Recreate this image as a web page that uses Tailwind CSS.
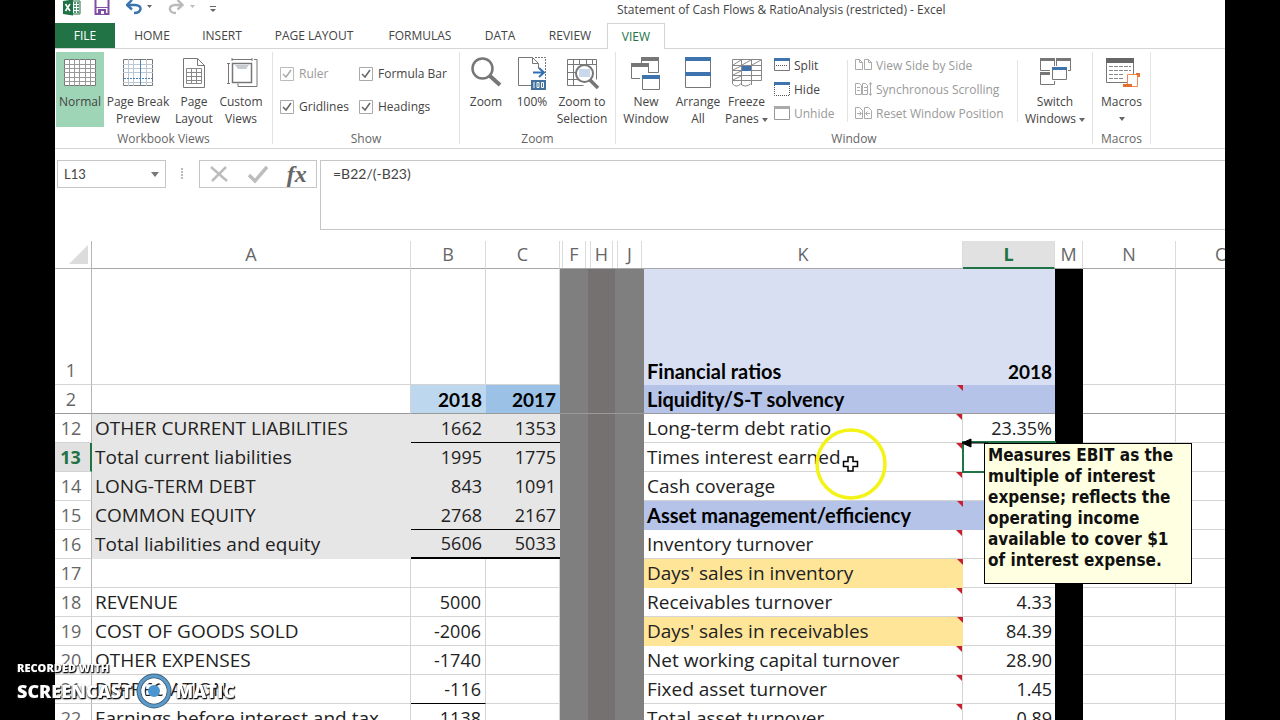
<!DOCTYPE html>
<html lang="en">
<head>
  <meta charset="UTF-8" />
  <meta name="viewport" content="width=device-width, initial-scale=1.0" />
  <title>Statement of Cash Flows & RatioAnalysis - Excel</title>
  <script src="https://cdn.jsdelivr.net/npm/@tailwindcss/browser@4"></script>
</head>
<body class="bg-black h-screen overflow-hidden px-[55px] font-['Open_Sans',sans-serif] text-[12px] leading-[17px] text-[#444]">

  <div class="bg-white h-full flex flex-col overflow-hidden">

    <!-- Title bar -->
    <header class="relative h-[23px] shrink-0 flex items-start pl-2">
      <svg class="w-[18px] h-4 shrink-0" viewBox="0 0 18 16">
        <path d="M9 1h8v13H9z" fill="#fff" stroke="#1e7145" />
        <path d="M11 3h2M14 3h2M11 6h2M14 6h2M11 9h2M14 9h2M11 12h2M14 12h2" stroke="#1e7145" stroke-width="1.4" />
        <path d="M0 1l10-1.500v16L0 14z" fill="#1e7145" />
        <path d="M2.500 4l4.500 7M7 4l-4.500 7" stroke="#fff" stroke-width="1.600" />
      </svg>
      <button class="ml-[13px] shrink-0" aria-label="Save">
        <svg class="w-4 h-4" viewBox="0 0 16 16">
          <path d="M1.500 0v14h13V0" fill="#fff" stroke="#7f4fa3" stroke-width="2" />
          <path d="M3.500 0h9v6h-9z" fill="#fff" />
          <path d="M2 7h12v1H2zM4 9h8v5H4z" fill="#7f4fa3" />
          <path d="M7 11h3v3H7z" fill="#fff" />
        </svg>
      </button>
      <button class="ml-4 shrink-0 flex" aria-label="Undo">
        <svg class="w-[26px] h-4" viewBox="0 0 26 16">
          <path d="M1 5h8c8 0 7 8-1 8M6 0L1 5l5 4.500" fill="none" stroke="#3b73af" stroke-width="2.400" />
          <path d="M21 5h5l-2.500 3z" fill="#666" />
        </svg>
      </button>
      <button class="ml-4 shrink-0 flex" aria-label="Redo">
        <svg class="w-[28px] h-4" viewBox="0 0 28 16">
          <path d="M14 5H7C0 5 0 13 8 13M9.500 0l5 5-5 4.500" fill="none" stroke="#bbb" stroke-width="2.400" />
          <path d="M22 5h5l-2.500 3z" fill="#bbb" />
        </svg>
      </button>
      <button class="ml-[13px] shrink-0" aria-label="Customize toolbar">
        <svg class="w-2 h-4" viewBox="0 0 8 16"><path d="M1 6.500h6" stroke="#666" /><path d="M1 9h6l-3 3z" fill="#666" /></svg>
      </button>
      <h1 class="flex-1 pl-[400px] leading-[19px] whitespace-nowrap">Statement of Cash Flows &amp; RatioAnalysis (restricted) - Excel</h1>
    </header>

    <!-- Ribbon tabs -->
    <nav class="h-[26px] shrink-0 flex border-b border-[#d4d4d4] leading-[26px]">
      <button class="w-[60px] bg-[#217346] text-white">FILE</button>
      <button class="w-[74px]">HOME</button>
      <button class="w-[66px]">INSERT</button>
      <button class="w-[118px]">PAGE LAYOUT</button>
      <button class="w-[94px]">FORMULAS</button>
      <button class="w-[66px]">DATA</button>
      <button class="w-[74px]">REVIEW</button>
      <button class="w-[58px] h-[26px] bg-white border border-b-0 border-[#d4d4d4] text-[#217346] leading-[25px]">VIEW</button>
    </nav>

    <!-- Ribbon -->
    <div class="h-[100px] shrink-0 flex pt-[3px] border-b border-[#d4d4d4]">
      <section class="w-[218px] shrink-0 flex flex-col border-r border-[#e3e3e3] mb-1">
        <div class="flex-1 flex items-start pl-px">
          <button class="w-12 h-[75px] pt-1 gap-px bg-[#9fd5b7] flex flex-col items-center">
            <svg class="w-9 h-9" viewBox="0 0 36 36">
              <path d="M2.500 3.500h31v26h-31z" fill="#fff" stroke="#777" />
              <path d="M2 8.500h32M2 12.500h32M2 16.500h32M2 21.500h32M2 25.500h32M7.500 3v27M12.500 3v27M17.500 3v27M23.500 3v27M28.500 3v27" stroke="#999" />
            </svg>
            <span>Normal</span>
          </button>
          <button class="w-[68px] h-[75px] pt-1 gap-px flex flex-col items-center">
            <svg class="w-9 h-9" viewBox="0 0 36 36">
              <path d="M3.500 3.500h29v26h-29z" fill="#fff" stroke="#777" />
              <path d="M3 8.500h30M3 12.500h30M3 16.500h30M3 26.500h30M8.500 3v27M13.500 3v27M26.500 3v27" stroke="#bcc7d3" />
              <path d="M20.500 4v25" stroke="#4d82b8" /><path d="M4 22.500h28" stroke="#4d82b8" stroke-dasharray="2 1" />
            </svg>
            <span>Page Break<br>Preview</span>
          </button>
          <button class="w-11 h-[75px] pt-1 gap-px flex flex-col items-center">
            <svg class="w-9 h-9" viewBox="0 0 36 36">
              <path d="M7.500 2.500h14l7 7v22h-21zM21.500 2.500v7h7" fill="#fff" stroke="#777" />
              <path d="M10.500 12.500h15v15h-15zM10 16.500h16M10 20.500h16M10 24.500h16M15.500 12v16M20.500 12v16" fill="none" stroke="#888" />
            </svg>
            <span>Page<br>Layout</span>
          </button>
          <button class="w-[50px] h-[75px] pt-1 gap-px flex flex-col items-center">
            <svg class="w-9 h-9" viewBox="0 0 36 36">
              <path d="M9.500 7.500h19v19h-19z" fill="#fff" stroke="#777" stroke-width="1.500" />
              <path d="M12 9h14l-3 4h-8z" fill="#c6cbd1" />
              <path d="M9 3.500h20M9 2v3M29 2v3M5.500 8v19M4 7.500h3M4 27.500h3M31 3.500h3v27H15v-3" fill="none" stroke="#777" />
            </svg>
            <span>Custom<br>Views</span>
          </button>
        </div>
        <h2 class="text-center text-[#666] leading-[10px]">Workbook Views</h2>
      </section>

      <section class="w-[187px] shrink-0 flex flex-col border-r border-[#e3e3e3] mb-1">
        <div class="flex-1 grid grid-cols-[79px_1fr] grid-rows-[33px_33px] content-start pl-[7px] pt-[5px]">
          <label class="flex items-center gap-[5px] text-[#999]"><input type="checkbox" checked disabled class="peer sr-only"><svg class="w-[14px] h-[14px]" viewBox="0 0 14 14"><path d="M.500 .500h13v13H.500z" fill="#fff" stroke="#bbb" /><path d="M3 7l3 3 5-7" fill="none" stroke="#aaa" stroke-width="1.500" /></svg>Ruler</label>
          <label class="flex items-center gap-[5px]"><input type="checkbox" checked class="peer sr-only"><svg class="w-[14px] h-[14px]" viewBox="0 0 14 14"><path d="M.500 .500h13v13H.500z" fill="#fff" stroke="#aaa" /><path d="M3 7l3 3 5-7" fill="none" stroke="#666" stroke-width="1.500" /></svg>Formula Bar</label>
          <label class="flex items-center gap-[5px]"><input type="checkbox" checked class="peer sr-only"><svg class="w-[14px] h-[14px]" viewBox="0 0 14 14"><path d="M.500 .500h13v13H.500z" fill="#fff" stroke="#aaa" /><path d="M3 7l3 3 5-7" fill="none" stroke="#666" stroke-width="1.500" /></svg>Gridlines</label>
          <label class="flex items-center gap-[5px]"><input type="checkbox" checked class="peer sr-only"><svg class="w-[14px] h-[14px]" viewBox="0 0 14 14"><path d="M.500 .500h13v13H.500z" fill="#fff" stroke="#aaa" /><path d="M3 7l3 3 5-7" fill="none" stroke="#666" stroke-width="1.500" /></svg>Headings</label>
        </div>
        <h2 class="text-center text-[#666] leading-[10px]">Show</h2>
      </section>

      <section class="w-[156px] shrink-0 flex flex-col border-r border-[#e3e3e3] mb-1">
        <div class="flex-1 flex items-start pl-[3px]">
          <button class="w-[46px] h-[75px] pt-1 gap-px flex flex-col items-center">
            <svg class="w-9 h-9" viewBox="0 0 36 36">
              <path d="M22 20l10 9" stroke="#777" stroke-width="4" />
              <circle cx="14.500" cy="12.500" r="10" fill="#fff" stroke="#777" stroke-width="2.500" />
            </svg>
            <span>Zoom</span>
          </button>
          <button class="w-[46px] h-[75px] pt-1 gap-px flex flex-col items-center">
            <svg class="w-9 h-9" viewBox="0 0 36 36">
              <path d="M17 29.500H4.500v-28h14l6 6v5M18.500 1.500v6h6" fill="#fff" stroke="#777" />
              <path d="M21 1.500h10.500V24" fill="none" stroke="#777" stroke-dasharray="2 1" />
              <path d="M19 16.500h10M25 12l5 4.500-5 4.500" fill="none" stroke="#2f6fb5" stroke-width="2" />
              <path d="M17 24h15v10H17z" fill="#41719c" />
              <path d="M20 26v6M23 26.500h2v5h-2zM27.500 26.500h2v5h-2z" fill="none" stroke="#fff" />
            </svg>
            <span>100%</span>
          </button>
          <button class="w-[54px] h-[75px] pt-1 gap-px flex flex-col items-center">
            <svg class="w-9 h-9" viewBox="0 0 36 36">
              <path d="M3.500 3.500h29v20M3.500 3.500v26h16M4 8.500h28M4 16.500h10M4 23.500h12M9.500 4v26M15.500 4v5M22.500 4v5M28.500 4v5" fill="none" stroke="#777" />
              <path d="M26 24l8 8" stroke="#777" stroke-width="3.500" />
              <circle cx="20.500" cy="17.500" r="8.500" fill="#fff" stroke="#777" stroke-width="2" />
              <path d="M15 13h11v8H15z" fill="#c9d8ec" />
            </svg>
            <span class="whitespace-nowrap">Zoom to<br>Selection</span>
          </button>
        </div>
        <h2 class="text-center text-[#666] leading-[10px]">Zoom</h2>
      </section>

      <section class="w-[477px] shrink-0 flex flex-col border-r border-[#e3e3e3] mb-1">
        <div class="flex-1 flex items-start pl-1">
          <button class="w-[52px] h-[75px] pt-1 gap-px flex flex-col items-center">
            <svg class="w-9 h-9" viewBox="0 0 36 36">
              <path d="M13.500 2.500h17v14h-17z" fill="#fff" stroke="#777" /><path d="M13 1h18v4H13z" fill="#777" />
              <path d="M3.500 8.500h17v14h-17z" fill="#fff" stroke="#777" /><path d="M3 7h18v4H3z" fill="#777" />
              <path d="M12 17h21v17H12z" fill="#fff" /><path d="M14.500 19.500h17v14h-17z" fill="#fff" stroke="#777" /><path d="M14 19h18v4H14z" fill="#3f73ad" />
            </svg>
            <span>New<br>Window</span>
          </button>
          <button class="w-[52px] h-[75px] pt-1 gap-px flex flex-col items-center">
            <svg class="w-9 h-9" viewBox="0 0 36 36">
              <path d="M5.500 2.500h25v29h-25z" fill="#fff" stroke="#777" />
              <path d="M5 1h26v4H5zM5 16h26v4H5z" fill="#3f73ad" />
            </svg>
            <span>Arrange<br>All</span>
          </button>
          <button class="w-[45px] h-[75px] pt-1 gap-px flex flex-col items-center whitespace-nowrap">
            <svg class="w-9 h-9" viewBox="0 0 36 36">
              <path d="M3.500 3.500h29v21h-29zM4 9.500h28M4 14.500h28M4 19.500h28M12.500 4v25M22.500 4v25M3.500 24v4q4 4 8 0 5 4 10 0M4 9l8-5M13 9l9-5M23 9l9-5M4 14l8-4M4 19l8-4M4 24l8-4" fill="none" stroke="#888" />
              <path d="M13 10h9v5h-9z" fill="#3f73ad" />
            </svg>
            <span>Freeze<br>Panes <svg class="inline w-[6px] h-[4px]" viewBox="0 0 6 4"><path d="M0 0h6L3 4z" fill="#666" /></svg></span>
          </button>
          <div class="w-[73px] ml-[5px] pt-px grid grid-rows-[24px_24px_24px]">
            <button class="flex items-center gap-1">
              <svg class="w-4 h-[14px]" viewBox="0 0 16 14"><path d="M.500 .500h15v12H.500z" fill="#fff" stroke="#777" /><path d="M0 0h16v3H0z" fill="#3f73ad" /><path d="M2 7.500h12" stroke="#555" stroke-dasharray="1 1" /></svg>Split
            </button>
            <button class="flex items-center gap-1">
              <svg class="w-4 h-[14px]" viewBox="0 0 16 14"><path d="M.500 1v12.500h15V1" fill="none" stroke="#555" stroke-dasharray="1 1" /><path d="M0 0h16v3H0z" fill="#3f73ad" /></svg>Hide
            </button>
            <button disabled class="flex items-center gap-1 text-[#999]">
              <svg class="w-4 h-[14px]" viewBox="0 0 16 14"><path d="M.500 .500h15v13H.500z" fill="#fff" stroke="#999" /><path d="M0 0h16v3H0z" fill="#aaa" /></svg>Unhide
            </button>
          </div>
          <div class="w-[171px] mt-2 h-[62px] pl-[7px] border-x border-[#e3e3e3] text-[#999] whitespace-nowrap">
            <div class="-mt-[7px] grid grid-rows-[24px_24px_24px]">
              <button disabled class="flex items-center gap-1">
                <svg class="w-[17px] h-[14px]" viewBox="0 0 17 14"><path d="M.500 1.500h4l3 3v7h-7zM9.500 1.500h4l3 3v7h-7zM4.500 1.500v3h3M13.500 1.500v3h3" fill="none" stroke="#aaa" /></svg>View Side by Side
              </button>
              <button disabled class="flex items-center gap-1">
                <svg class="w-[17px] h-[14px]" viewBox="0 0 17 14"><path d="M.500 1.500h4l2 2v9h-6zM7.500 1.500h3l2 2v9h-5zM2 5.500h3M2 8.500h3M9 5.500h3M9 8.500h3M15.500 1v12M14 2.500l1.500-2 1.500 2M14 11.500l1.500 2 1.500-2" fill="none" stroke="#aaa" /></svg>Synchronous Scrolling
              </button>
              <button disabled class="flex items-center gap-1">
                <svg class="w-[17px] h-[14px]" viewBox="0 0 17 14"><path d="M.500 1.500h4l3 3v8h-7zM9.500 1.500h4l3 3v8h-7zM2 7.500h4M4.500 5.500l2 2-2 2M15 7.500h-4M12.500 5.500l-2 2 2 2" fill="none" stroke="#aaa" /></svg>Reset Window Position
              </button>
            </div>
          </div>
          <button class="w-[74px] h-[75px] pt-1 gap-px flex flex-col items-center whitespace-nowrap">
            <svg class="w-9 h-9" viewBox="0 0 36 36">
              <path d="M3.500 3.500h14v11h-14zM19.500 3.500h14v11h-14zM3.500 17.500h14v11h-14z" fill="#fff" stroke="#777" />
              <path d="M3 2h15v3H3zM19 2h15v3H19zM3 16h15v3H3z" fill="#777" />
              <path d="M13 10h18v15H13z" fill="#fff" /><path d="M15.500 12.500h14v11h-14z" fill="#fff" stroke="#777" /><path d="M15 11h15v3H15z" fill="#3f73ad" />
            </svg>
            <span>Switch<br>Windows <svg class="inline w-[6px] h-[4px]" viewBox="0 0 6 4"><path d="M0 0h6L3 4z" fill="#666" /></svg></span>
          </button>
        </div>
        <h2 class="text-center text-[#666] leading-[10px]">Window</h2>
      </section>

      <section class="w-[58px] shrink-0 flex flex-col border-r border-[#e3e3e3] mb-1">
        <div class="flex-1 flex items-start justify-center">
          <button class="h-[75px] pt-1 gap-px flex flex-col items-center">
            <svg class="w-9 h-9" viewBox="0 0 36 36">
              <path d="M2.500 3.500h27v23h-27z" fill="#fff" stroke="#777" /><path d="M2 2h28v5H2z" fill="#666" />
              <path d="M5 10.500h22M5 14.500h22M5 18.500h14M5 22.500h14" stroke="#888" stroke-dasharray="4 1" />
              <path d="M23.500 18.500h10v12H21v-2h2.500z" fill="#fff" stroke="#f08a4b" />
              <path d="M32 17h4v4h-2v-2h-2zM19 28h9v3h-9z" fill="#e3702e" />
            </svg>
            <span>Macros</span>
            <svg class="mt-[6px] w-[6px] h-[4px]" viewBox="0 0 6 4"><path d="M0 0h6L3 4z" fill="#666" /></svg>
          </button>
        </div>
        <h2 class="text-center text-[#666] leading-[10px]">Macros</h2>
      </section>
    </div>

    <!-- Formula bar -->
    <div class="h-[92px] shrink-0 flex items-start pt-[11px] pl-[2px] font-[Lato,sans-serif] text-[13px]">
      <div class="w-[109px] h-7 flex items-center border border-[#c6c6c6]">
        <input aria-label="Name Box" value="L13" class="flex-1 min-w-0 pl-[6px] outline-none">
        <svg class="mr-[6px] w-2 h-[5px]" viewBox="0 0 8 5"><path d="M0 0h8L4 5z" fill="#777" /></svg>
      </div>
      <svg class="mx-[15px] mt-2 w-[3px] h-3" viewBox="0 0 3 12"><path d="M0 0h2v2H0zM0 3h2v2H0zM0 6h2v2H0zM0 9h2v2H0z" fill="#bbb" /></svg>
      <div class="w-[118px] h-7 flex items-center justify-around border border-[#c6c6c6]">
        <button aria-label="Cancel"><svg class="w-5 h-5" viewBox="0 0 20 20"><path d="M2 3l16 14M17 3L3 17" stroke="#bdbdbd" stroke-width="2.500" /></svg></button>
        <button aria-label="Enter"><svg class="w-5 h-5" viewBox="0 0 20 20"><path d="M1 11l6 6L19 3" fill="none" stroke="#bdbdbd" stroke-width="3.500" /></svg></button>
        <button aria-label="Insert Function" class="font-['Liberation_Serif',serif] italic font-bold text-[24px] leading-[24px] text-[#666]">fx</button>
      </div>
      <textarea aria-label="Formula" class="flex-1 h-[70px] ml-[3px] pl-3 pt-1 resize-none outline-none border border-r-0 border-[#c6c6c6] text-[14px]">=B22/(-B23)</textarea>
    </div>

    <!-- Sheet -->
    <main class="relative flex-1 min-h-0 overflow-hidden font-['Open_Sans',sans-serif] text-[18px] text-[#222]">
      <table class="table-fixed w-[1214px] border-separate border-spacing-0">
        <colgroup>
          <col class="w-[37px]"><col class="w-[319px]"><col class="w-[75px]"><col class="w-[74px]">
          <col class="w-[28px]"><col class="w-[27px]"><col class="w-[29px]">
          <col class="w-[319px]"><col class="w-[92px]"><col class="w-[28px]"><col class="w-[93px]"><col class="w-[93px]">
        </colgroup>
        <thead>
          <tr id="col-heads"></tr>
        </thead>
        <tbody id="rows"></tbody>
      </table>

      <!-- Selected cell outline and comment -->
      <div class="absolute left-[907px] top-[200px] w-[94px] h-[32px] border-2 border-[#217346]"></div>
      <svg class="absolute left-[907px] top-[197px] w-[26px] h-[10px]" viewBox="0 0 26 10"><path d="M0 5l9-4v8zM8 5h18" fill="#000" stroke="#000" /></svg>
      <aside class="absolute left-[929px] top-[202px] w-[208px] h-[141px] pl-[3px] pt-px bg-[#ffffe1] border border-black font-['DejaVu_Sans_Condensed','DejaVu_Sans',sans-serif] font-bold text-[17px] leading-[21px] text-[#111] whitespace-nowrap">Measures EBIT as the<br>multiple of interest<br>expense; reflects the<br>operating income<br>available to cover $1<br>of interest expense.</aside>

      <!-- Mouse pointer with halo -->
      <svg class="absolute left-[760px] top-[187px] w-[72px] h-[72px]" viewBox="0 0 72 72">
        <circle cx="36" cy="36" r="34" fill="none" stroke="#f3f315" stroke-width="3.500" />
        <path d="M33 29h5v4.500h4.500v5H38V43h-5v-4.500h-4.500v-5H33z" fill="#fff" stroke="#000" stroke-width="1.500" />
      </svg>
    </main>
  </div>

  <!-- Recorder watermark -->
  <div class="fixed left-[17px] bottom-[11px] font-['Open_Sans',sans-serif] font-extrabold text-white [text-shadow:1px_1px_1px_#000,0_1px_2px_#333]">
    <p class="text-[11px] leading-[14px]">RECORDED WITH</p>
    <p class="flex items-center text-[18px] leading-[36px] -mt-[2px]">SCREENCAST
      <svg class="mx-[4px] w-[36px] h-[36px]" viewBox="0 0 36 36">
        <circle cx="18" cy="18" r="15" fill="none" stroke="#41617a" stroke-width="5" />
        <circle cx="18" cy="18" r="15" fill="none" stroke="#5a9bcb" stroke-width="3" />
        <circle cx="18" cy="18" r="11" fill="none" stroke="#fff" stroke-width="3" />
        <circle cx="18" cy="18" r="6" fill="#4a96d0" />
      </svg>
      MATIC</p>
  </div>

  <script>
    const columns = ['', 'A', 'B', 'C', 'F', 'H', 'J', 'K', 'L', 'M', 'N', 'O'];

    // n: row number, then the text of columns A, B, C, K and L
    const rows = [
      { n: 1, k: 'Financial ratios', l: '2018', kind: 'title' },
      { n: 2, b: '2018', c: '2017', k: 'Liquidity/S-T solvency', kind: 'section', note: true, frozen: true },
      { n: 12, a: 'OTHER CURRENT LIABILITIES', b: '1662', c: '1353', k: 'Long-term debt ratio', l: '23.35%', gray: true, line: 'both', note: true },
      { n: 13, a: 'Total current liabilities', b: '1995', c: '1775', k: 'Times interest earned', gray: true, note: true },
      { n: 14, a: 'LONG-TERM DEBT', b: '843', c: '1091', k: 'Cash coverage', gray: true, note: true },
      { n: 15, a: 'COMMON EQUITY', b: '2768', c: '2167', k: 'Asset management/efficiency', gray: true, line: 'both', kind: 'section', note: true },
      { n: 16, a: 'Total liabilities and equity', b: '5606', c: '5033', k: 'Inventory turnover', gray: true, line: 'double', note: true },
      { n: 17, k: "Days' sales in inventory", kind: 'days', note: true },
      { n: 18, a: 'REVENUE', b: '5000', k: 'Receivables turnover', l: '4.33', note: true },
      { n: 19, a: 'COST OF GOODS SOLD', b: '-2006', k: "Days' sales in receivables", l: '84.39', kind: 'days', note: true },
      { n: 20, a: 'OTHER EXPENSES', b: '-1740', k: 'Net working capital turnover', l: '28.90', note: true },
      { n: 21, a: 'DEPRECIATION', b: '-116', k: 'Fixed asset turnover', l: '1.45', line: 'b', note: true },
      { n: 22, a: 'Earnings before interest and tax', b: '1138', k: 'Total asset turnover', l: '0.89', note: true }
    ];

    document.getElementById('col-heads').innerHTML = columns.map(name => {
      if (!name) {
        return `<td class="h-7 border-b border-r border-[#b5b5b5]"><svg class="ml-[14px] w-[19px] h-[19px]" viewBox="0 0 19 19"><path d="M19 0v19H0z" fill="#dcdcdc" /></svg></td>`;
      }
      // F, H and J stand between hidden columns, so their edges are doubled
      if (name === 'F' || name === 'H' || name === 'J') {
        return `<th scope="col" class="h-7 p-0 leading-[27px] text-[#666] font-normal border-b border-b-[#a6a6a6]"><span class="block mx-[2px] border-x border-[#dcdcdc]">${name}</span></th>`;
      }
      const look = name === 'L'
        ? 'bg-[#e1e1e1] text-[#217346] font-bold border-b-2 border-b-[#217346] leading-[26px]'
        : 'text-[#666] font-normal border-b border-b-[#a6a6a6] leading-[27px]';
      return `<th scope="col" class="h-7 p-0 overflow-hidden border-r border-r-[#dcdcdc] ${look}">${name}</th>`;
    }).join('');

    const kFill = {
      title: "bg-[#d9dff3] font-[Lato,sans-serif] font-bold text-[20px] text-black",
      section: "bg-[#b4c3e7] font-[Lato,sans-serif] font-bold text-[20px] text-black",
      days: 'bg-[#ffe598] text-[19px]'
    };
    const lFills = { title: 'bg-[#d9dff3] font-[Lato,sans-serif] font-bold text-[19px] text-black', section: 'bg-[#b4c3e7]' };

    document.getElementById('rows').innerHTML = rows.map(r => {
      const height = r.n === 1 ? 'h-[116px]' : 'h-[29px]';
      const edge = r.frozen ? 'border-b border-b-[#9a9a9a]' : 'border-b border-b-[#d4d4d4]';
      const cell = `p-0 leading-[27px] whitespace-nowrap overflow-hidden ${r.n === 1 ? 'align-bottom' : 'align-middle'}`;
      const side = r.gray ? 'bg-[#e7e6e6]' : 'border-r border-r-[#d4d4d4]';
      const flat = r.gray ? 'border-b border-b-[#e7e6e6]' : edge;
      const black = 'border-b border-b-black';
      const thick = 'border-b-2 border-b-black';
      const bLine = r.line === 'double' ? thick : r.line ? black : flat;
      const cLine = r.line === 'double' ? thick : r.line === 'both' ? black : flat;
      const bFill = r.n === 2 ? 'bg-[#bdd7ee] font-[Lato,sans-serif] font-bold text-[19px] text-black' : `${side} text-[18px]`;
      const cFill = r.n === 2 ? 'bg-[#9bc2e6] font-[Lato,sans-serif] font-bold text-[19px] text-black' : `${side} text-[18px]`;
      const head = r.n === 13
        ? 'bg-[#e1e1e1] text-[#217346] font-bold border-r-2 border-r-[#217346]'
        : 'text-[#666] font-normal border-r border-r-[#b5b5b5]';
      const grayEdge = r.frozen ? 'border-b border-b-[#9a9a9a]' : '';
      const mark = r.note ? '<svg class="absolute right-0 top-0 w-[6px] h-[6px]" viewBox="0 0 6 6"><path d="M0 0h6v6z" fill="#c8202f" /></svg>' : '';
      const lFill = lFills[r.kind] || 'text-[18px]';
      const kEdge = r.kind ? (r.frozen ? edge : '') : `${edge} border-r border-r-[#d4d4d4]`;
      return `<tr>
        <th scope="row" class="${cell} ${height} ${edge} ${head} pr-1 text-center">${r.n}</th>
        <td class="${cell} ${flat} ${side} pl-[3px] text-[19px]">${r.a || ''}</td>
        <td class="${cell} ${bLine} ${bFill} pr-1 text-right">${r.b || ''}</td>
        <td class="${cell} ${cLine} ${cFill} pr-1 text-right">${r.c || ''}</td>
        <td class="${grayEdge} bg-[#7f7f7f]"></td>
        <td class="${grayEdge} bg-[#757171]"></td>
        <td class="${grayEdge} bg-[#7f7f7f]"></td>
        <td class="${cell} ${kEdge} ${kFill[r.kind] || 'text-[19px]'} relative pl-[3px]">${r.k}${mark}</td>
        <td class="${cell} ${lFills[r.kind] ? grayEdge : edge} ${lFill} pr-[3px] text-right">${r.l || ''}</td>
        <td class="bg-black"></td>
        <td class="${edge} border-r border-r-[#d4d4d4]"></td>
        <td class="${edge}"></td>
      </tr>`;
    }).join('');
  </script>

</body>
</html>
